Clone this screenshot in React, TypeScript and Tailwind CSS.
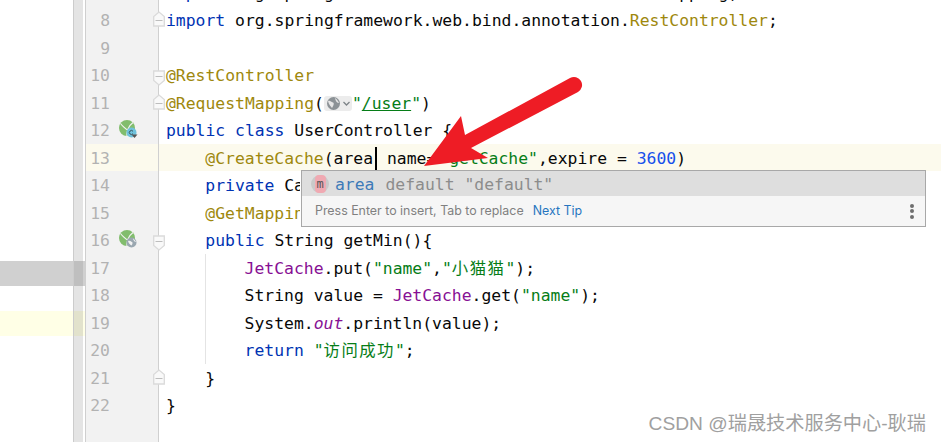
const mono = "font-['DejaVu_Sans_Mono','Noto_Sans_CJK_SC',monospace]";

const K = ({ children }: { children: React.ReactNode }) => <span className="text-[#0033b3]">{children}</span>;
const A = ({ children }: { children: React.ReactNode }) => <span className="text-[#9e880d]">{children}</span>;
const S = ({ children }: { children: React.ReactNode }) => <span className="text-[#067d17]">{children}</span>;
const P = ({ children }: { children: React.ReactNode }) => <span className="text-[#871094]">{children}</span>;
const Cjk = ({ children }: { children: React.ReactNode }) => <span className="tracking-[1.45px]">{children}</span>;
const Clip = ({ children }: { children: React.ReactNode }) => (
  <span className="inline-block h-[27.5px] w-[95px] overflow-hidden align-top">{children}</span>
);

const lines: { n: number; indent: number; code: React.ReactNode; active?: boolean }[] = [
  { n: 7, indent: 0, code: <><K>import</K> org.springframework.web.bind.annotation.GetMapping;</> },
  { n: 8, indent: 0, code: <><K>import</K> org.springframework.web.bind.annotation.<A>RestController</A>;</> },
  { n: 9, indent: 0, code: "" },
  { n: 10, indent: 0, code: <A>@RestController</A> },
  {
    n: 11,
    indent: 0,
    code: (
      <>
        <A>@RequestMapping</A>(
        <span className="inline-flex h-[15px] w-[28px] items-center rounded-[3px] bg-[#ececec] align-[-2px]">
          <svg width="28" height="15" viewBox="0 0 28 15" fill="none">
            <circle cx="9.500" cy="7.500" r="6.500" fill="#8c9296" />
            <path d="M4 5 C6 4 7 6 9 6.500 C10.500 7 9.500 10 8 12 C7 10.500 4.500 8.500 4 5Z M11 2 C12.500 3 14 4.500 15 7 C13 7 11.500 5 11 2Z" fill="#e6e6e6" />
            <path d="M19.500 6l3 3 3-3" stroke="#7d8387" strokeWidth="1.300" />
          </svg>
        </span>
        <S>"<span className="underline">/user</span>"</S>)
      </>
    ),
  },
  { n: 12, indent: 0, code: <><K>public class</K> UserController {"{"}</> },
  {
    n: 13,
    indent: 1,
    active: true,
    code: (
      <>
        <A>@CreateCache</A>(area
        <span className="ml-[2px] inline-block h-[23px] w-[2px] bg-black align-[-6px]" /> name=
        <span className="pl-[3px]"><S>"getCache"</S></span>,expire = <span className="text-[#1750eb]">3600</span>)
      </>
    ),
  },
  { n: 14, indent: 1, code: <Clip><K>private</K> Cache&lt;String,String&gt; jetCache;</Clip> },
  { n: 15, indent: 1, code: <Clip><A>@GetMapping</A>(<S>"/min"</S>)</Clip> },
  { n: 16, indent: 1, code: <><K>public</K> String getMin(){"{"}</> },
  { n: 17, indent: 2, code: <><P>JetCache</P>.put(<S>"name"</S>,<S>"<Cjk>小猫猫</Cjk>"</S>);</> },
  { n: 18, indent: 2, code: <>String value = <P>JetCache</P>.get(<S>"name"</S>);</> },
  { n: 19, indent: 2, code: <>System.<span className="italic text-[#871094]">out</span>.println(value);</> },
  { n: 20, indent: 2, code: <><K>return</K> <S>"<Cjk>访问成功</Cjk>"</S>;</> },
  { n: 21, indent: 1, code: "}" },
  { n: 22, indent: 0, code: "}" },
  { n: 23, indent: 0, code: "" },
];

function Fold({ kind }: { kind: "top" | "bottom" }) {
  const bottom = kind === "bottom";
  return (
    <svg
      className={bottom ? "translate-y-[3px]" : "-translate-y-[1px]"}
      width="12"
      height="16"
      viewBox="0 0 12 16"
      fill="#f9f9f9"
    >
      <path d={bottom ? "M.7 1H11.300V10.500L6 15L.7 10.500Z" : "M.7 15H11.300V5.500L6 1L.7 5.500Z"} stroke="#dadada" strokeWidth="1.300" />
      <path d={bottom ? "M2.500 6.500H9.500" : "M2.500 9.500H9.500"} stroke="#bdbdbd" />
    </svg>
  );
}

function SpringIcon({ kind }: { kind: "class" | "web" }) {
  return (
    <svg className="-translate-y-[1px]" width="19" height="19" viewBox="0 0 19 19">
      <circle cx="8" cy="8" r="8" fill="#82bd6d" />
      <path d="M1.500 3.500C4 7 7 9 10 11M8 16C7.500 12.500 9 6 14 2.500" stroke="#f2f2f2" strokeWidth="1.200" fill="none" />
      <circle cx="12.500" cy="12.500" r="5" fill={kind === "class" ? "#6fc2dc" : "#9aa7b0"} />
      {kind === "class" ? (
        <>
          <path d="M14 11.300a2 2 0 1 0 0 2.400" stroke="#39525e" strokeWidth="1" fill="none" />
          <path d="M12.500 14.500h6l-3 3.500z" fill="#555" />
        </>
      ) : (
        <path d="M9 11c2-1 3 .5 4 1s.5 2-.5 3.500c-1.500-.5-3-2.500-3.500-4.500zM14 8.500c1 .5 2.500 2 3 3.500-1.500 0-2.500-1.500-3-3.500z" fill="#f2f2f2" />
      )}
    </svg>
  );
}

const foldFor: Record<number, "top" | "bottom"> = { 8: "top", 10: "bottom", 11: "top", 16: "bottom", 21: "top" };

export default function App() {
  return (
    <div className={`relative flex h-[442px] w-[941px] overflow-hidden bg-white text-[16.4px] text-[#080808] ${mono}`}>
      <div className="w-[73px] shrink-0">
        <div className="h-[261px]" />
        <div className="h-[25px] bg-[#d0d0d0]" />
        <div className="h-[25px]" />
        <div className="h-[25px] bg-[#ffffe6]" />
      </div>
      <div className="w-[12px] shrink-0 border-l border-r-2 border-l-[#cccccc] border-r-white bg-[#e4e4e4]">
        <div className="h-[261px]" />
        <div className="-mr-[2px] h-[25px] border-r-2 border-r-[#d0d0d0] bg-[#bfbfbf]" />
        <div className="h-[25px]" />
        <div className="-mr-[2px] h-[25px] border-r-2 border-r-[#ffffe6] bg-[#e2e2cc]" />
      </div>
      <div className="min-w-0 flex-1 pt-[6.25px]">
        <div className="-mt-[27.5px] flex flex-col">
          {lines.map((l) => (
            <div key={l.n} className={`flex h-[27.5px] items-center leading-[27.5px] ${l.active ? "bg-[#fcfaed]" : ""}`}>
              <div className={`flex h-full w-[74px] shrink-0 items-center border-x border-l-[#cfcfcf] border-r-[#d0d0d0] ${l.active ? "bg-[#fcfaed]" : "bg-[#f2f2f2]"}`}>
                <span className="w-[25px] shrink-0 pt-[2px] pr-px text-right text-[#b2b2b2]">{l.n <= 22 ? l.n : ""}</span>
                <span className="ml-[8px] flex w-[19px] shrink-0 justify-center">
                  {l.n === 12 && <SpringIcon kind="class" />}
                  {l.n === 16 && <SpringIcon kind="web" />}
                </span>
                <span className="ml-[15px] flex w-[12px] shrink-0">{foldFor[l.n] && <Fold kind={foldFor[l.n]} />}</span>
              </div>
              <div className="relative flex h-full flex-1 items-center whitespace-pre pt-[2px] pl-[7px]">
                {l.n >= 17 && l.n <= 20 && <span className="absolute left-[46px] top-0 h-full w-px bg-[#e4e4e4]" />}
                <span style={{ paddingLeft: l.indent * 39.3 }}>{l.code}</span>
              </div>
            </div>
          ))}
        </div>
      </div>

      <div className="absolute left-[301px] top-[170px] w-[625px] border border-[#a8a8a8] bg-[#f6f6f6]">
        <div className="flex h-[25px] items-center bg-[#dedede]">
          <span className="ml-[9px] flex h-[18px] w-[18px] items-center justify-center rounded-full bg-[#c9c9c9]">
            <span className="flex h-[18px] w-[11px] items-center justify-center rounded-[4px] bg-[#f0a9b2] text-[12px] leading-none text-[#555]">m</span>
          </span>
          <span className="ml-[6px] pt-[3px] text-[#3d7ab8]">area</span>
          <span className="ml-[11px] pt-[3px] text-[#8c8c8c]">default "default"</span>
        </div>
        <div className="flex h-[30px] items-center font-['Inter',sans-serif] text-[12.4px] text-[#808080]">
          <span className="ml-[13px]">Press Enter to insert, Tab to replace</span>
          <span className="ml-[9px] text-[#2675bf]">Next Tip</span>
          <span className="ml-auto mr-[11px] flex flex-col gap-[1.500px]">
            <span className="h-[4px] w-[4px] rounded-full bg-[#6e6e6e]" />
            <span className="h-[4px] w-[4px] rounded-full bg-[#6e6e6e]" />
            <span className="h-[4px] w-[4px] rounded-full bg-[#6e6e6e]" />
          </span>
        </div>
      </div>

      <svg className="absolute left-[420px] top-[70px]" width="170" height="100" viewBox="0 0 170 100">
        <path d="M4 96L41 46L45 65L150 8A8 8 0 0 1 158 22L51 78L68 88Z" fill="#ee1c25" />
      </svg>

      <div className="absolute bottom-[6px] right-[15px] font-['Liberation_Sans','Noto_Sans_CJK_SC',sans-serif] text-[19.2px] leading-[24px] text-[#a0a0a0]">CSDN @瑞晟技术服务中心-耿瑞</div>
    </div>
  );
}
